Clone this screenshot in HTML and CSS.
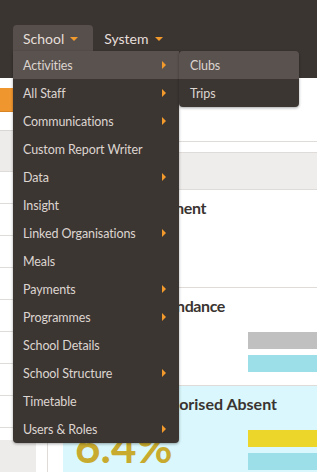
FILE: index.html
```html
<!DOCTYPE html>
<html lang="en">
<head>
<meta charset="utf-8">
<title>School menu</title>
<link rel="stylesheet" href="styles.css">
</head>
<body>
<div class="page">
  <header class="topbar">
    <nav class="mainnav">
      <div class="navitem open">
        <span class="navlabel">School</span><span class="caret"></span>
        <ul class="dropdown">
          <li class="item active has-sub">Activities<span class="arrow"></span>
            <ul class="submenu">
              <li class="item active">Clubs</li>
              <li class="item">Trips</li>
            </ul>
          </li>
          <li class="item has-sub">All Staff<span class="arrow"></span></li>
          <li class="item has-sub">Communications<span class="arrow"></span></li>
          <li class="item">Custom Report Writer</li>
          <li class="item has-sub">Data<span class="arrow"></span></li>
          <li class="item">Insight</li>
          <li class="item has-sub">Linked Organisations<span class="arrow"></span></li>
          <li class="item">Meals</li>
          <li class="item has-sub">Payments<span class="arrow"></span></li>
          <li class="item has-sub">Programmes<span class="arrow"></span></li>
          <li class="item">School Details</li>
          <li class="item has-sub">School Structure<span class="arrow"></span></li>
          <li class="item">Timetable</li>
          <li class="item has-sub">Users &amp; Roles<span class="arrow"></span></li>
        </ul>
      </div>
      <div class="navitem">
        <span class="navlabel">System</span><span class="caret"></span>
      </div>
    </nav>
  </header>
  <div class="body">
    <aside class="sidebar">
      <div class="side-gap"></div>
      <div class="side-active"></div>
      <div class="side-gap2"></div>
      <div class="side-band"></div>
      <div class="side-gap3"></div>
      <div class="side-row"></div>
      <div class="side-row"></div>
      <div class="side-row"></div>
      <div class="side-row"></div>
      <div class="side-row"></div>
      <div class="side-row"></div>
      <div class="side-row"></div>
      <div class="side-row"></div>
    </aside>
    <div class="rail"></div>
    <main class="content">
      <div class="toolbar"></div>
      <div class="band"></div>
      <section class="card card-first">
        <h2 class="card-title">Attainment</h2>
      </section>
      <section class="card card-second">
        <h2 class="card-title">Attendance</h2>
        <div class="bars">
          <div class="bar bar-grey"></div>
          <div class="bar bar-cyan"></div>
        </div>
      </section>
      <section class="card card-alert">
        <h2 class="card-title">Unauthorised Absent</h2>
        <div class="stat-row">
          <div class="stat">6.4%</div>
          <div class="bars">
            <div class="bar bar-yellow"></div>
            <div class="bar bar-cyan"></div>
          </div>
        </div>
      </section>
    </main>
  </div>
</div>
</body>
</html>
```

FILE: styles.css
```css
* { box-sizing: border-box; }
html, body { margin: 0; padding: 0; }
body {
  font-family: Lato, "Noto Sans", sans-serif;
  background: #eeeceb;
  width: 317px;
  height: 472px;
  overflow: hidden;
}
.page { position: relative; width: 317px; height: 472px; overflow: hidden; }

.topbar {
  height: 78px;
  background: #3b3532;
  padding: 25px 0 0 13px;
  position: relative;
  z-index: 10;
}
.mainnav { display: flex; }
.navitem {
  position: relative;
  height: 26px;
  display: flex;
  align-items: center;
  padding: 0 15px 0 10px;
  color: #e6dfda;
  font-size: 14px;
  border-radius: 4px 4px 0 0;
}
.navitem.open { background: #574f4b; }
.navitem + .navitem { padding-left: 11px; }
.caret {
  width: 0; height: 0;
  margin-left: 6px;
  margin-top: 1px;
  border-left: 4px solid transparent;
  border-right: 4px solid transparent;
  border-top: 4px solid #f39a2c;
}

.dropdown, .submenu {
  list-style: none;
  margin: 0;
  padding: 0;
  background: #3c3633;
  position: absolute;
}
.dropdown {
  top: 26px;
  left: 0;
  width: 166px;
  border-radius: 0 0 4px 4px;
  box-shadow: 0 1px 3px rgba(0,0,0,0.35);
}
.submenu {
  top: 0;
  left: 166px;
  width: 120px;
  border-radius: 4px;
  box-shadow: 0 1px 3px rgba(0,0,0,0.35);
}
.item {
  position: relative;
  height: 28px;
  display: flex;
  align-items: center;
  padding-left: 10px;
  color: #dcd5d0;
  font-size: 12.5px;
  letter-spacing: -0.1px;
  white-space: nowrap;
}
.submenu .item { padding-left: 11px; }
.item.active { background: #5a524e; }
.submenu .item.active { border-radius: 4px 4px 0 0; }
.arrow {
  position: absolute;
  right: 13px;
  top: 10px;
  width: 0; height: 0;
  border-top: 4px solid transparent;
  border-bottom: 4px solid transparent;
  border-left: 4px solid #f39a2c;
}

.body {
  display: flex;
  height: 394px;
}
.sidebar {
  width: 36px;
  flex: none;
  display: flex;
  flex-direction: column;
}
.side-gap { height: 10px; background: #fff; }
.side-active { height: 24px; background: #f0962f; border-bottom: 1px solid #d98424; }
.side-gap2 { height: 18px; background: #fff; }
.side-band { height: 42px; background: #eeeceb; border-top: 1px solid #d9d6d4; border-bottom: 1px solid #dedbd9; }
.side-gap3 { height: 32px; background: #fff; border-bottom: 1px solid #dedbd9; }
.side-row { height: 32px; background: #fff; border-bottom: 1px solid #dedbd9; flex: none; }
.side-row:last-child { height: 12px; border-bottom: 0; }

.rail {
  width: 12px;
  flex: none;
  background: #fff;
  border-right: 1px solid #dedbd9;
}
.content {
  flex: 1;
  background: #fff;
  padding-left: 15px;
  display: flex;
  flex-direction: column;
  min-width: 0;
}
.toolbar { height: 64px; flex: none; border-bottom: 1px solid #dedbd9; margin-left: -15px; }
.band {
  height: 38px;
  flex: none;
  margin-top: 10px;
  margin-left: -15px;
  background: #efedec;
  border-top: 1px solid #dedbd9;
  border-bottom: 1px solid #dedbd9;
}
.card {
  flex: none;
  height: 98px;
  padding: 8px 0 0 12px;
  border-bottom: 1px solid #dedbd9;
  width: 300px;
}
.card-title {
  margin: 0;
  font-size: 16px;
  font-weight: 700;
  color: #3a3431;
  line-height: 20px;
  white-space: nowrap;
  letter-spacing: -0.4px;
  text-align: right;
}
.card-first .card-title { width: 131px; }
.card-second .card-title { width: 150px; }
.card-alert .card-title { width: 202px; letter-spacing: 0; }
.bars {
  margin-left: 173px;
  margin-top: 16px;
  display: flex;
  flex-direction: column;
  gap: 6px;
}
.bar { height: 17px; width: 120px; }
.bar-grey { background: #c0c0c0; }
.bar-cyan { background: #9ddfe9; }
.bar-yellow { background: #edd62a; }
.card-alert {
  background: #d9f7fc;
  height: 100px;
  border-bottom: 0;
}
.stat-row { display: flex; align-items: flex-start; }
.stat {
  font-size: 44px;
  font-weight: 700;
  color: #c8ab2e;
  line-height: 44px;
  margin-top: 10px;
  width: 173px;
  flex: none;
}
.stat-row .bars { margin-left: 0; margin-top: 16px; }
```
